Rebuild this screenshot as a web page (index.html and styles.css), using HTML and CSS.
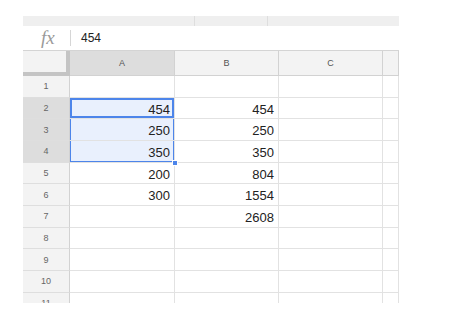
FILE: index.html
```html
<!DOCTYPE html>
<html lang="en">
<head>
    <meta charset="UTF-8">
    <meta name="viewport" content="width=device-width, initial-scale=1.0">
    <title>Sheet</title>
    <link rel="stylesheet" href="styles.css">
</head>
<body>
    <div class="sheet">
        <div class="toolbar">
            <span class="tool tool-wide"></span>
            <span class="tool tool-mid"></span>
            <span class="tool tool-rest"></span>
        </div>

        <div class="formula">
            <span class="fx">fx</span>
            <span class="formula-sep"></span>
            <span class="formula-value">454</span>
        </div>

        <div class="grid">
            <div class="corner"></div>
            <div class="col-head selected">A</div>
            <div class="col-head">B</div>
            <div class="col-head">C</div>
            <div class="col-head"></div>

            <div class="row-head">1</div>
            <div class="cell"></div><div class="cell"></div><div class="cell"></div><div class="cell"></div>

            <div class="row-head selected">2</div>
            <div class="cell num sel active">454</div><div class="cell num">454</div><div class="cell"></div><div class="cell"></div>

            <div class="row-head selected">3</div>
            <div class="cell num sel mid">250</div><div class="cell num">250</div><div class="cell"></div><div class="cell"></div>

            <div class="row-head selected">4</div>
            <div class="cell num sel last">350<span class="handle"></span></div><div class="cell num">350</div><div class="cell"></div><div class="cell"></div>

            <div class="row-head">5</div>
            <div class="cell num">200</div><div class="cell num">804</div><div class="cell"></div><div class="cell"></div>

            <div class="row-head">6</div>
            <div class="cell num">300</div><div class="cell num">1554</div><div class="cell"></div><div class="cell"></div>

            <div class="row-head">7</div>
            <div class="cell"></div><div class="cell num">2608</div><div class="cell"></div><div class="cell"></div>

            <div class="row-head">8</div>
            <div class="cell"></div><div class="cell"></div><div class="cell"></div><div class="cell"></div>

            <div class="row-head">9</div>
            <div class="cell"></div><div class="cell"></div><div class="cell"></div><div class="cell"></div>

            <div class="row-head">10</div>
            <div class="cell"></div><div class="cell"></div><div class="cell"></div><div class="cell"></div>

            <div class="row-head">11</div>
            <div class="cell"></div><div class="cell"></div><div class="cell"></div><div class="cell"></div>
        </div>
    </div>
</body>
</html>
```

FILE: styles.css
```css
* {
    margin: 0;
    padding: 0;
    box-sizing: border-box;
}

body {
    font-family: "Liberation Sans", Arial, sans-serif;
    background-color: #fff;
    color: #222;
}

.sheet {
    width: 376px;
    margin: 16px 0 0 23px;
}

.toolbar {
    display: flex;
    height: 10px;
    background-color: #efefef;
}

.tool {
    height: 100%;
    border-right: 1px solid #dedede;
}

.tool-wide {
    width: 172px;
}

.tool-mid {
    width: 73px;
}

.tool-rest {
    flex: 1;
    border-right: none;
}

.formula {
    display: flex;
    align-items: center;
    height: 24px;
}

.fx {
    width: 47px;
    padding-left: 18px;
    font-family: "Liberation Serif", "Times New Roman", serif;
    font-style: italic;
    font-size: 19px;
    color: #9a9a9a;
}

.formula-sep {
    width: 1px;
    height: 16px;
    background-color: #d6d6d6;
    margin-right: 10px;
}

.formula-value {
    font-size: 12px;
    color: #222;
}

.grid {
    display: grid;
    grid-template-columns: 47px 105px 104px 104px 16px;
    grid-template-rows: 25px repeat(11, 21.67px);
    height: 253px;
    overflow: hidden;
    border-top: 1px solid #d4d4d4;
}

.corner {
    background-color: #f3f3f3;
    border-right: 4px solid #c4c4c4;
    border-bottom: 4px solid #c4c4c4;
}

.col-head {
    display: flex;
    align-items: center;
    justify-content: center;
    font-size: 9px;
    color: #555;
    background-color: #f3f3f3;
    border-right: 1px solid #d2d2d2;
    border-bottom: 1px solid #d2d2d2;
}

.row-head {
    display: flex;
    align-items: center;
    justify-content: center;
    font-size: 9px;
    color: #666;
    background-color: #f3f3f3;
    border-right: 1px solid #d2d2d2;
    border-bottom: 1px solid #dedede;
}

.col-head.selected,
.row-head.selected {
    background-color: #dddddd;
}

.cell {
    position: relative;
    border-right: 1px solid #e2e2e2;
    border-bottom: 1px solid #e2e2e2;
    font-size: 13px;
    line-height: 21px;
    color: #222;
}

.num {
    text-align: right;
    padding-right: 4px;
    padding-top: 1px;
}

.sel {
    background-color: #e9f0fd;
}

.active {
    box-shadow: inset 0 0 0 2px #4d85ea;
}

.mid {
    box-shadow: inset 1px 0 0 #4d85ea, inset -1px 0 0 #4d85ea;
}

.last {
    box-shadow: inset 1px 0 0 #4d85ea, inset -1px 0 0 #4d85ea, inset 0 -1px 0 #4d85ea;
}

.handle {
    position: absolute;
    right: -4px;
    bottom: -4px;
    width: 6px;
    height: 6px;
    background-color: #4d85ea;
    border: 1px solid #fff;
    z-index: 2;
}
```
